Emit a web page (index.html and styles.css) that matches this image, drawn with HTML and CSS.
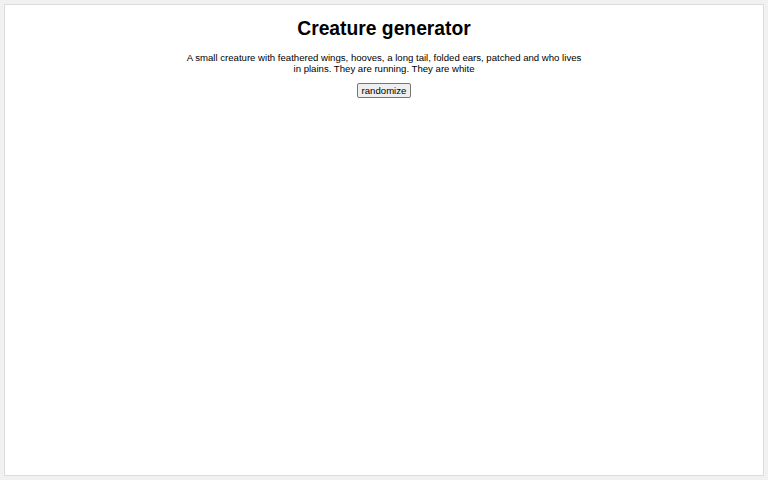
FILE: index.html
```html
<!DOCTYPE html>
<html lang="en">
<head>
    <meta charset="UTF-8">
    <meta name="viewport" content="width=device-width, initial-scale=1.0">
    <title>Creature generator</title>
    <link rel="stylesheet" href="styles.css">
</head>
<body>
    <div class="page">
        <h1>Creature generator</h1>
        <p class="description" id="description">A small creature with feathered wings, hooves, a long tail, folded ears, patched and who lives in plains. They are running. They are white</p>
        <button id="randomize">randomize</button>
    </div>
</body>
</html>
```

FILE: styles.css
```css
html, body {
    height: 100%;
}
body {
    margin: 0;
    padding: 4px;
    box-sizing: border-box;
    background: #f1f1f1;
    font-family: "Liberation Sans", Arial, sans-serif;
    color: #000;
}
.page {
    height: 100%;
    box-sizing: border-box;
    background: #fff;
    border: 1px solid #dcdcdc;
    text-align: center;
    padding-top: 12px;
}
h1 {
    font-size: 19.3px;
    line-height: 24px;
    margin: 0 0 11px;
}
.description {
    font-size: 9.6px;
    line-height: 11px;
    max-width: 400px;
    margin: 0 auto 6px;
}
button {
    font-family: "Liberation Sans", Arial, sans-serif;
    font-size: 9.6px;
    line-height: 11px;
    padding: 1px 4px;
    background: #efefef;
    border: 1px solid #767676;
    border-radius: 2px;
    color: #000;
}
```
